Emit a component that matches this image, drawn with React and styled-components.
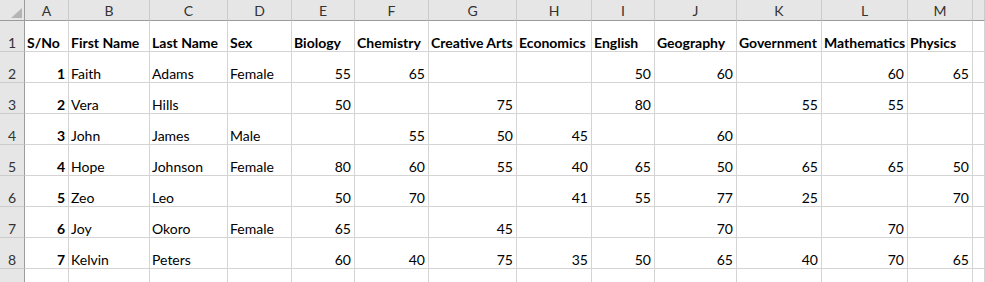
import React from "react";
import styled, { createGlobalStyle } from "styled-components";

const Global = createGlobalStyle`
  html, body { margin: 0; padding: 0; background: #ffffff; }
  body { font-family: "Lato", "Liberation Sans", sans-serif; }
`;

const COLS = [44, 81, 78, 64, 63, 74, 88, 75, 63, 82, 85, 86, 65];
const LETTERS = ["A", "B", "C", "D", "E", "F", "G", "H", "I", "J", "K", "L", "M", ""];

const Sheet = styled.div`
  display: grid;
  grid-template-columns: 25px ${COLS.map((c) => c + "px").join(" ")} 1fr;
  grid-template-rows: 21px repeat(9, 31px);
  width: 985px;
  height: 282px;
  overflow: hidden;
  font-size: 14px;
  color: #000;
`;

const Corner = styled.div`
  position: relative;
  background: #e6e6e6;
  border-right: 1px solid #9c9c9c;
  border-bottom: 1px solid #9c9c9c;
  box-sizing: border-box;
`;

const CornerMark = styled.svg`
  position: absolute;
  left: 9px;
  top: 8px;
`;

const ColHead = styled.div`
  background: #e6e6e6;
  border-right: 1px solid #cbcbcb;
  border-bottom: 1px solid #9c9c9c;
  box-sizing: border-box;
  display: flex;
  align-items: flex-end;
  justify-content: center;
  padding-bottom: 1px;
  line-height: 16px;
  font-size: 14px;
  color: #333;
`;

const RowHead = styled.div`
  background: #e6e6e6;
  border-right: 1px solid #9c9c9c;
  border-bottom: 1px solid #cbcbcb;
  box-sizing: border-box;
  display: flex;
  align-items: flex-end;
  justify-content: center;
  padding-bottom: 0;
  line-height: 17px;
  color: #333;
`;

const Cell = styled.div`
  border-right: 1px solid #d4d4d4;
  border-bottom: 1px solid #d4d4d4;
  box-sizing: border-box;
  display: flex;
  align-items: flex-end;
  justify-content: ${(p) => (p.$num ? "flex-end" : "flex-start")};
  padding: 0 ${(p) => (p.$num ? "3px" : "0")} 0 ${(p) => (p.$num ? "0" : "2px")};
  line-height: 17px;
  white-space: nowrap;
  overflow: visible;
  font-weight: ${(p) => (p.$bold ? 700 : 400)};
`;

const HEAD = ["S/No", "First Name", "Last Name", "Sex", "Biology", "Chemistry", "Creative Arts", "Economics", "English", "Geography", "Government", "Mathematics", "Physics", ""];

const DATA = [
  [1, "Faith", "Adams", "Female", 55, 65, "", "", 50, 60, "", 60, 65],
  [2, "Vera", "Hills", "", 50, "", 75, "", 80, "", 55, 55, ""],
  [3, "John", "James", "Male", "", 55, 50, 45, "", 60, "", "", ""],
  [4, "Hope", "Johnson", "Female", 80, 60, 55, 40, 65, 50, 65, 65, 50],
  [5, "Zeo", "Leo", "", 50, 70, "", 41, 55, 77, 25, "", 70],
  [6, "Joy", "Okoro", "Female", 65, "", 45, "", "", 70, "", 70, ""],
  [7, "Kelvin", "Peters", "", 60, 40, 75, 35, 50, 65, 40, 70, 65],
];

export default function App() {
  return (
    <>
      <Global />
      <Sheet>
        <Corner>
          <CornerMark width="14" height="11" viewBox="0 0 14 11">
            <polygon points="13,0 13,10 2,10" fill="#b4b4b4" />
          </CornerMark>
        </Corner>
        {LETTERS.map((l, i) => (
          <ColHead key={"c" + i}>{l}</ColHead>
        ))}

        <RowHead>1</RowHead>
        {HEAD.map((h, i) => (
          <Cell key={"h" + i} $bold>
            {h}
          </Cell>
        ))}

        {DATA.map((row, r) => (
          <React.Fragment key={"r" + r}>
            <RowHead>{r + 2}</RowHead>
            {row.map((v, c) => (
              <Cell key={c} $num={typeof v === "number"} $bold={c === 0}>
                {v}
              </Cell>
            ))}
            <Cell />
          </React.Fragment>
        ))}

        <RowHead />
        {LETTERS.map((_, i) => (
          <Cell key={"e" + i} />
        ))}
      </Sheet>
    </>
  );
}
